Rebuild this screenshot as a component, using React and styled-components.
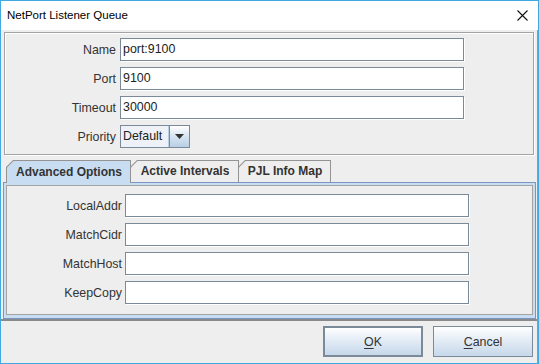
import React from 'react'
import styled, { createGlobalStyle } from 'styled-components'

const GlobalStyle = createGlobalStyle`
  html, body {
    margin: 0;
    padding: 0;
    background: #ffffff;
  }
  * { box-sizing: border-box; }
`

const Window = styled.div`
  width: 539px;
  height: 364px;
  border: 1px solid #41a9e1;
  display: flex;
  flex-direction: column;
  background: #eeeeee;
  font-family: "Liberation Sans", Arial, sans-serif;
  font-size: 12.4px;
  color: #333333;
  overflow: hidden;
`

const TitleBar = styled.div`
  height: 29px;
  flex: none;
  background: #ffffff;
  display: flex;
  align-items: center;
  justify-content: space-between;
  padding: 0 10px 0 6px;
`

const Title = styled.span`
  font-size: 11.5px;
  color: #000000;
  padding-bottom: 1px;
`

const CloseButton = styled.span`
  display: flex;
  align-items: center;
  padding-bottom: 1px;
`

const Body = styled.div`
  flex: 1;
  display: flex;
  flex-direction: column;
  border-right: 1px solid #9a9a9a;
`

const Etched = styled.div`
  border: 1px solid #a3a3a3;
  box-shadow: inset 1px 1px 0 #ffffff, 1px 1px 0 #ffffff;
`

const TopPanel = styled(Etched)`
  margin: 2px 3px 0 3px;
  height: 123px;
  padding: 5px 0 0 0;
`

const Form = styled.div`
  display: grid;
  grid-template-columns: ${p => p.$label}px 344px;
  column-gap: ${p => p.$gap}px;
  row-gap: 6px;
  align-items: center;
`

const Label = styled.label`
  text-align: right;
  color: #333333;
  white-space: nowrap;
`

const Field = styled.div`
  height: 23px;
  background: #ffffff;
  border: 1px solid #7a8a99;
  box-shadow: 1px 1px 0 #ffffff;
  display: flex;
  align-items: center;
  padding: 0 2px 1px;
  color: #222222;
`

const Combo = styled.div`
  width: 70px;
  height: 23px;
  display: flex;
  border: 1px solid #7a8a99;
  background: #eef2f8;
`

const ComboText = styled.div`
  flex: 1;
  display: flex;
  align-items: center;
  padding: 0 2px 1px;
  color: #222222;
  border-right: 1px solid #b8cfe5;
`

const ComboArrow = styled.div`
  width: 20px;
  display: flex;
  align-items: center;
  justify-content: center;
  border-left: 1px solid #7a8a99;
  background: linear-gradient(#ffffff, #dae6f2 45%, #b8cfe5);
`

const Tabs = styled.div`
  display: flex;
  margin: 5px 0 0 5px;
  height: 22px;
  position: relative;
  z-index: 1;
`

const TabOuter = styled.div`
  background: #939393;
  clip-path: polygon(7px 0, 100% 0, 100% 100%, 0 100%, 0 7px);
  padding: 1px 1px 0 1px;
  margin-right: -1px;
  width: ${p => p.$width}px;
  height: ${p => (p.$active ? 23 : 22)}px;
`

const TabInner = styled.div`
  height: 100%;
  background: ${p => (p.$active ? '#c8ddf2' : '#eeeeee')};
  clip-path: polygon(6.5px 0, 100% 0, 100% 100%, 0 100%, 0 6.5px);
  display: flex;
  align-items: center;
  justify-content: center;
  padding: 0 0 1px 1px;
  font-size: 12px;
  font-weight: bold;
  color: #333333;
  white-space: nowrap;
`

const TabContent = styled.div`
  margin: 0 1px 0 2px;
  height: 137px;
  border: 1px solid #7c96c4;
  background: #c8ddf2;
  padding: 2px 2px 3px 2px;
  display: flex;
`

const InnerPanel = styled(Etched)`
  flex: 1;
  background: #eeeeee;
  padding: 8px 0 0 0;
  box-shadow: none;
`

const Separator = styled.div`
  height: 2px;
  background: #8a8a8a;
  flex: none;
`

const ButtonBar = styled.div`
  flex: 1;
  display: flex;
  justify-content: flex-end;
  gap: 10px;
  padding: 5px 4px 0 0;
`

const Button = styled.button`
  width: 100px;
  height: 31px;
  font-family: "Liberation Sans", Arial, sans-serif;
  font-size: 12.4px;
  color: #333333;
  border: ${p => (p.$default ? '2px' : '1px')} solid #7a8a99;
  background: linear-gradient(#ffffff, #e6eef7 40%, #c6d8ea);
  padding: 0;
  display: flex;
  align-items: center;
  justify-content: center;

  u { text-decoration: underline; text-underline-offset: 2px; }
`

const topRows = [
  ['Name', 'port:9100'],
  ['Port', '9100'],
  ['Timeout', '30000'],
]

const advRows = ['LocalAddr', 'MatchCidr', 'MatchHost', 'KeepCopy']

const tabs = [
  { name: 'Advanced Options', active: true, width: 125 },
  { name: 'Active Intervals', width: 109 },
  { name: 'PJL Info Map', width: 93 },
]

export default function App() {
  return (
    <>
      <GlobalStyle />
      <Window>
        <TitleBar>
          <Title>NetPort Listener Queue</Title>
          <CloseButton>
            <svg width="11" height="11" viewBox="0 0 11 11">
              <path d="M0.5 0.5 L10.5 10.5 M10.5 0.5 L0.5 10.5" stroke="#111" strokeWidth="1.1" />
            </svg>
          </CloseButton>
        </TitleBar>
        <Body>
          <TopPanel>
            <Form $label={111} $gap={4}>
              {topRows.map(([l, v]) => (
                <React.Fragment key={l}>
                  <Label>{l}</Label>
                  <Field>{v}</Field>
                </React.Fragment>
              ))}
              <Label>Priority</Label>
              <Combo>
                <ComboText>Default</ComboText>
                <ComboArrow>
                  <svg width="9" height="5" viewBox="0 0 9 5">
                    <path d="M0 0 H9 L4.5 5 Z" fill="#333" />
                  </svg>
                </ComboArrow>
              </Combo>
            </Form>
          </TopPanel>
          <Tabs>
            {tabs.map(t => (
              <TabOuter key={t.name} $active={t.active} $width={t.width}>
                <TabInner $active={t.active}>{t.name}</TabInner>
              </TabOuter>
            ))}
          </Tabs>
          <TabContent>
            <InnerPanel>
              <Form $label={115} $gap={3}>
                {advRows.map(l => (
                  <React.Fragment key={l}>
                    <Label>{l}</Label>
                    <Field />
                  </React.Fragment>
                ))}
              </Form>
            </InnerPanel>
          </TabContent>
          <Separator />
          <ButtonBar>
            <Button $default><u>O</u>K</Button>
            <Button><u>C</u>ancel</Button>
          </ButtonBar>
        </Body>
      </Window>
    </>
  )
}
